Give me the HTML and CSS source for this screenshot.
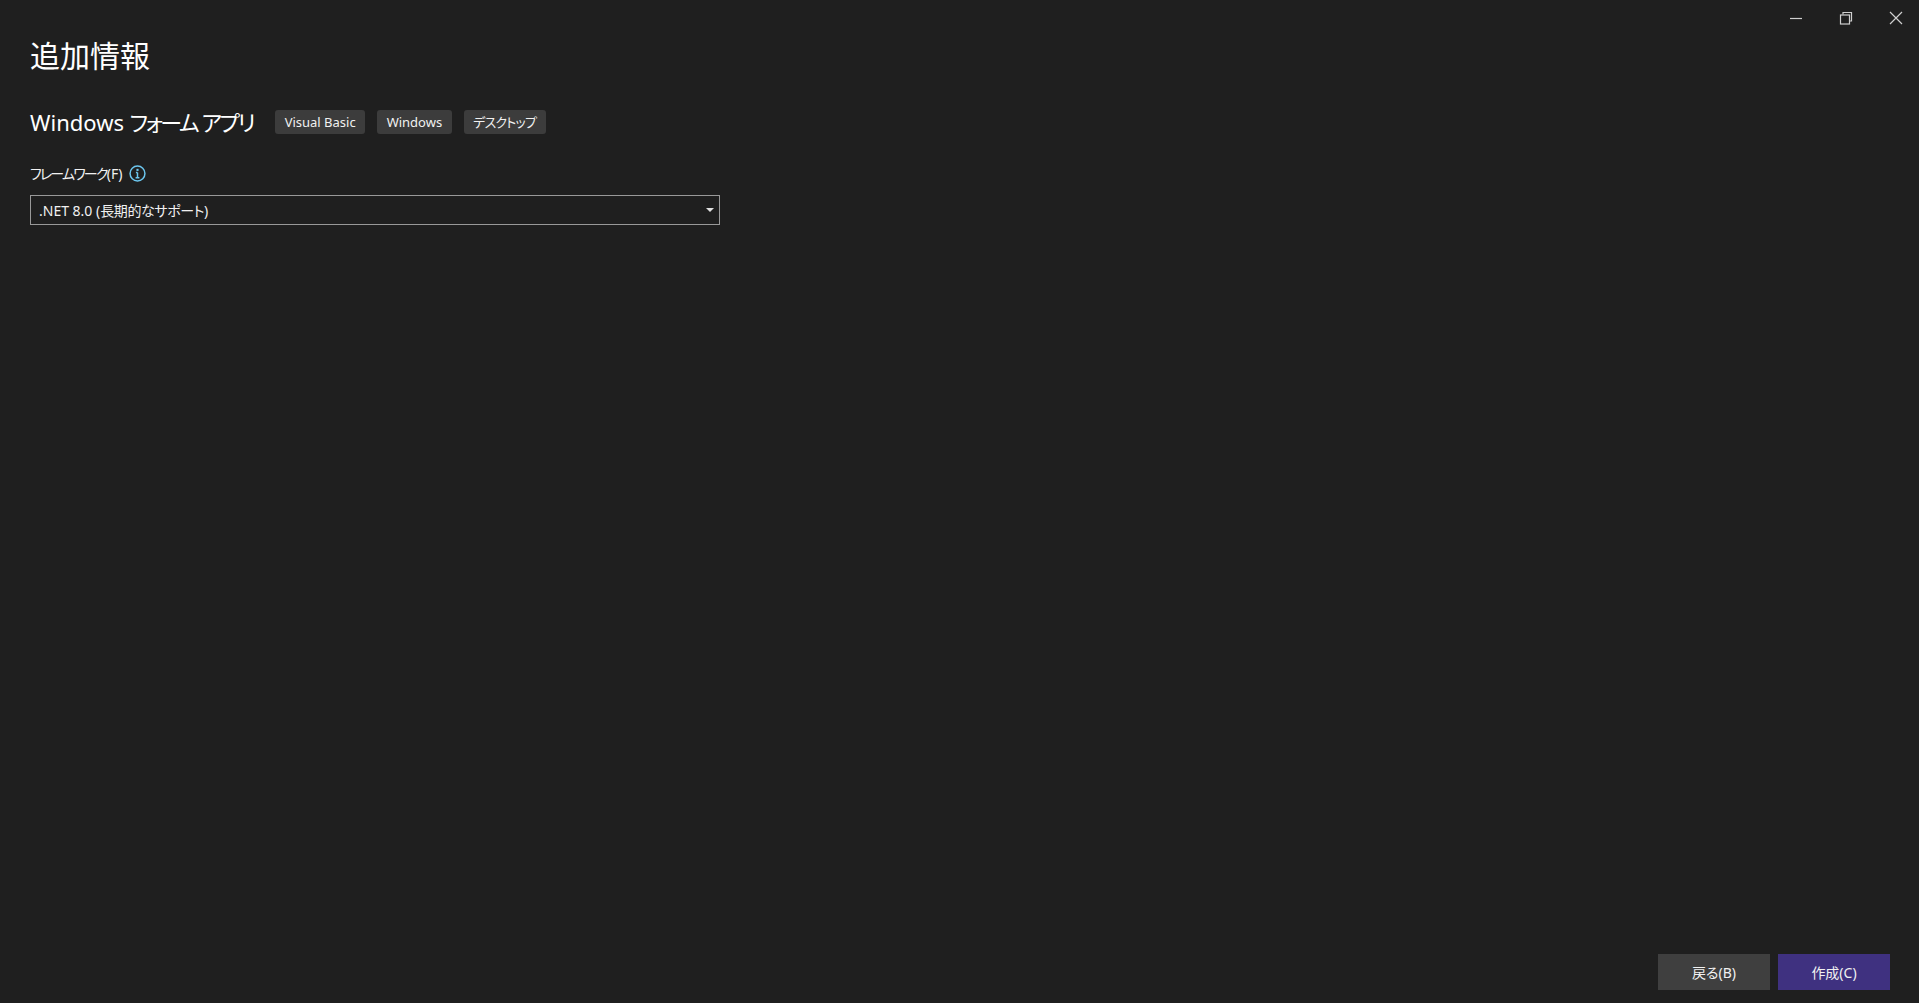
FILE: index.html
```html
<!DOCTYPE html>
<html lang="ja">
<head>
    <title>追加情報</title>
    <link rel="stylesheet" href="styles.css">
</head>
<body>
    <div class="window">
        <div class="title-bar">
            <svg class="win-icon" viewBox="0 0 16 16"><path d="M2 8.5h12"/></svg>
            <svg class="win-icon" viewBox="0 0 16 16"><path d="M5 4.5V2.5h8.5v8.5h-2"/><rect x="2.5" y="5" width="9" height="9"/></svg>
            <svg class="win-icon" viewBox="0 0 16 16"><path d="M2 2l12 12M14 2L2 14"/></svg>
        </div>

        <main class="content">
            <h1>追加情報</h1>

            <div class="project-row">
                <h2>Windows <span class="kana">フォーム アプリ</span></h2>
                <span class="tag">Visual Basic</span>
                <span class="tag">Windows</span>
                <span class="tag"><span class="kana">デスクトップ</span></span>
            </div>

            <div class="field-label">
                <span><span class="kana">フレームワーク</span>(F)</span>
                <svg class="info-icon" viewBox="0 0 16 16">
                    <circle cx="8" cy="8" r="7"/>
                    <path d="M8 7v5M6.2 12h3.6M6.5 7H8"/>
                    <rect class="info-dot" x="7" y="3.6" width="2" height="2"/>
                </svg>
            </div>

            <div class="combo">
                <span>.NET 8.0 (<span class="kana">長期的なサポート</span>)</span>
                <svg class="combo-arrow" viewBox="0 0 8 4"><path d="M0 0h8L4 4z"/></svg>
            </div>
        </main>

        <footer class="footer">
            <button class="btn">戻る(B)</button>
            <button class="btn btn-primary">作成(C)</button>
        </footer>
    </div>
</body>
</html>
```

FILE: styles.css
```css
* {
    box-sizing: border-box;
}
html, body {
    margin: 0;
    height: 100%;
}
body {
    background: #1f1f1f;
    color: #f1f1f1;
    font-family: "Noto Sans", "Noto Sans CJK JP", sans-serif;
    font-feature-settings: "palt";
    overflow: hidden;
}
.window {
    height: 100%;
    display: flex;
    flex-direction: column;
}
.title-bar {
    height: 36px;
    display: flex;
    justify-content: flex-end;
    align-items: center;
    gap: 34px;
    padding: 0 15px 0 0;
}
.win-icon {
    width: 16px;
    height: 16px;
    fill: none;
    stroke: #cfcfcf;
    stroke-width: 1.2;
}
.content {
    flex: 1;
    padding: 0 30px;
}
h1 {
    margin: 0;
    font-size: 30px;
    line-height: 40px;
    font-weight: 400;
    color: #fff;
}
.project-row {
    display: flex;
    align-items: center;
    margin-top: 33px;
    height: 26px;
}
h2 {
    margin: 0 22px 0 0;
    font-size: 22px;
    line-height: 26px;
    font-weight: 400;
    color: #fff;
    white-space: nowrap;
}
h2 .kana {
    letter-spacing: -2.4px;
    word-spacing: 1px;
}
.tag {
    height: 24px;
    line-height: 24px;
    padding: 0 9.5px;
    margin-right: 12px;
    background: #3c3c3c;
    border-radius: 3px;
    font-size: 13px;
    color: #f1f1f1;
}
.tag .kana {
    letter-spacing: -0.8px;
}
.field-label {
    display: flex;
    align-items: center;
    margin-top: 28px;
    height: 20px;
    font-size: 14px;
    color: #f1f1f1;
}
.field-label .kana {
    letter-spacing: -1.8px;
}
.info-icon {
    width: 17px;
    height: 17px;
    margin-left: 7px;
    fill: none;
    stroke: #6cc6ee;
    stroke-width: 1.4;
}
.info-dot {
    fill: #6cc6ee;
    stroke: none;
}
.combo {
    width: 690px;
    height: 30px;
    margin-top: 12px;
    padding: 0 5px 0 8px;
    display: flex;
    align-items: center;
    justify-content: space-between;
    border: 1px solid #999;
    font-size: 14px;
    color: #f1f1f1;
}
.combo .kana {
    letter-spacing: -0.4px;
}
.combo-arrow {
    width: 8px;
    height: 4px;
    fill: #e0e0e0;
}
.footer {
    display: flex;
    justify-content: flex-end;
    gap: 8px;
    padding: 0 29px 13px 0;
}
.btn {
    width: 112px;
    height: 36px;
    border: 0;
    padding: 0;
    background: #3f3f3f;
    color: #f1f1f1;
    font-family: inherit;
    font-feature-settings: inherit;
    font-size: 14px;
}
.btn-primary {
    background: #3f3180;
}
```
